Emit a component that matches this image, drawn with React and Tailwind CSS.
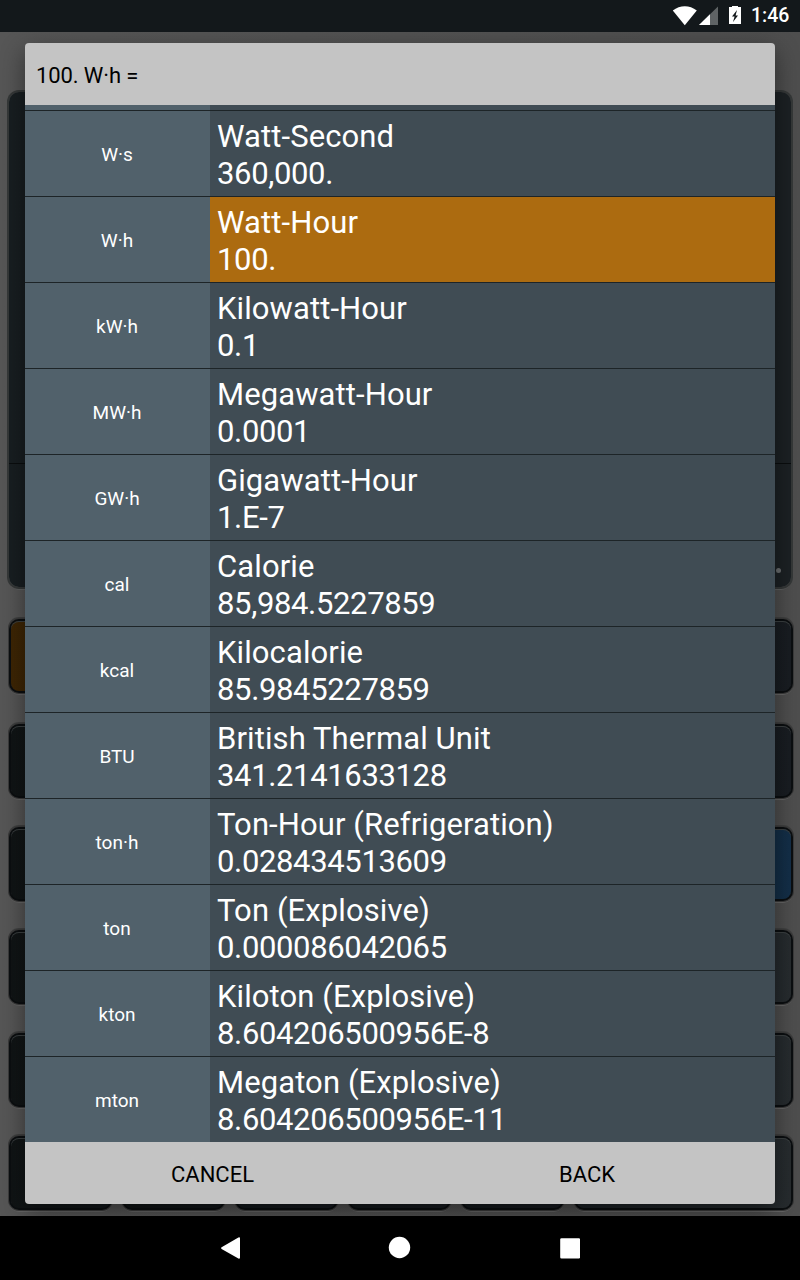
import React from 'react';
import clsx from 'clsx';

const units = [
  { symbol: 'W·s', name: 'Watt-Second', value: '360,000.' },
  { symbol: 'W·h', name: 'Watt-Hour', value: '100.', selected: true },
  { symbol: 'kW·h', name: 'Kilowatt-Hour', value: '0.1' },
  { symbol: 'MW·h', name: 'Megawatt-Hour', value: '0.0001' },
  { symbol: 'GW·h', name: 'Gigawatt-Hour', value: '1.E-7' },
  { symbol: 'cal', name: 'Calorie', value: '85,984.5227859' },
  { symbol: 'kcal', name: 'Kilocalorie', value: '85.9845227859' },
  { symbol: 'BTU', name: 'British Thermal Unit', value: '341.2141633128' },
  { symbol: 'ton·h', name: 'Ton-Hour (Refrigeration)', value: '0.028434513609' },
  { symbol: 'ton', name: 'Ton (Explosive)', value: '0.000086042065' },
  { symbol: 'kton', name: 'Kiloton (Explosive)', value: '8.604206500956E-8' },
  { symbol: 'mton', name: 'Megaton (Explosive)', value: '8.604206500956E-11' },
];

const DARK = 'from-[#101415] to-[#13181b]';
const NAVY = 'from-[#14191c] to-[#191d22]';
const SLATE = 'from-[#1c2226] to-[#272c2f]';

// Colours of each keypad row, first key to last key
const keyRows = [
  ['from-[#3d2504] to-[#422a07]', DARK, DARK, DARK, DARK, DARK, NAVY],
  [DARK, DARK, DARK, DARK, DARK, DARK, NAVY],
  [DARK, DARK, DARK, DARK, DARK, DARK, 'from-[#0d273f] to-[#142f48]'],
  [DARK, DARK, DARK, DARK, DARK, DARK, SLATE],
  [DARK, DARK, DARK, DARK, DARK, DARK, SLATE],
];

const Key = ({ color }) => (
  <div className="h-[74px] rounded-[10px] bg-[#0b0e10] p-[2px] shadow-[0_0_0_1px_#3b3b3b,0_-1px_0_1px_#404141,0_2px_0_0_#666]">
    <div
      className={clsx(
        'h-full rounded-[8px] bg-linear-to-r shadow-[inset_0_1px_0_0_#3c4142]',
        color
      )}
    />
  </div>
);

const StatusBar = () => (
  <div className="flex h-8 items-center justify-end bg-[#13181b] pr-[11px] text-white">
    <svg width="26" height="20" viewBox="0 0 26 20" fill="#fff">
      <path d="M.8 4.6C8-1.2 17.6-1.2 24.8 4.6L12.8 19.2Z" />
    </svg>
    <svg className="ml-px" width="20" height="20" viewBox="0 0 20 20">
      <path d="M19 .5V19H0Z" fill="#5f6365" />
      <path d="M11 8.3V19H0Z" fill="#fff" />
    </svg>
    <svg className="ml-[10px]" width="12" height="20" viewBox="0 0 12 20">
      <path d="M3 -1h6v2h3v17H0V1h3Z" fill="#fff" />
      <path d="M8 4L3 10.6h2.6L4 16l5-6.4H6.6Z" fill="#13181b" />
    </svg>
    <span className="ml-[10px] w-[38px] text-right text-[19.5px] leading-8 font-medium whitespace-nowrap">
      1:46
    </span>
  </div>
);

const Calculator = () => (
  <div className="h-[1184px] overflow-hidden bg-linear-to-r from-[#565656] to-[#4e4e4e] px-2 pt-[60px]">
    {/* Display */}
    <div className="mx-px flex h-[495px] flex-col rounded-[10px] bg-linear-to-r from-[#181e21] to-[#1c2124] shadow-[0_0_0_2px_#353838,0_3px_0_0_#606262]">
      <div className="h-[372px] border-b border-[#0a0d0e]" />
      <div className="flex flex-1 items-end justify-end pr-[10px] pb-[14px]">
        <div className="size-[5px] rounded-full bg-[#6a6d6f]" />
      </div>
    </div>

    {/* Keypad */}
    <div className="-mr-px ml-px mt-8 flex flex-col gap-[29px]">
      {keyRows.map((row, i) => (
        <div key={i} className={clsx('grid grid-cols-7 gap-[9px]', i === 0 && 'mb-0.5')}>
          {row.map((color, j) => (
            <Key key={j} color={color} />
          ))}
        </div>
      ))}
      <div className="grid grid-cols-[103px_103px_103px_103px_103px_1fr] gap-[10px]">
        <Key color={DARK} />
        <Key color={DARK} />
        <Key color={NAVY} />
        <Key color={NAVY} />
        <Key color={NAVY} />
        <Key color={SLATE} />
      </div>
    </div>
  </div>
);

const UnitRow = ({ unit }) => (
  <div className="flex h-[86px] border-t border-[#1d2427] text-white">
    <div className="flex w-[185px] items-center justify-center bg-[#51616b] pt-[3px] pr-px text-[19px]">
      {unit.symbol}
    </div>
    <div
      className={clsx(
        'flex-1 pt-[7px] pl-[7px] text-[31px] leading-[37px]',
        unit.selected ? 'bg-[#ac6b10]' : 'bg-[#404c54]'
      )}
    >
      <div className="tracking-[0.1px]">{unit.name}</div>
      <div className="tracking-[-0.35px]">{unit.value}</div>
    </div>
  </div>
);

const NavBar = () => (
  <div className="flex h-16 items-center justify-center bg-black">
    <svg width="360" height="24" viewBox="0 0 360 24" fill="#fff">
      <path d="M1.6 11.3L18.4 1.5Q20 .7 20 2.4V21.6Q20 23.3 18.4 22.5L1.6 12.9Q.4 12 1.6 11.3Z" />
      <circle cx="179.5" cy="11.5" r="10.7" />
      <rect className="translate-x-[0.3px]" x="339.9" y="2.2" width="20" height="20.4" rx="1.3" />
    </svg>
  </div>
);

const App = () => (
  <div className="relative h-[1280px] w-[800px] overflow-hidden font-['Roboto',sans-serif]">
    <StatusBar />
    <Calculator />
    <NavBar />

    {/* Conversion dialog */}
    <div className="absolute inset-x-0 top-8 h-[1184px] overflow-hidden px-[25px] pt-[11px]">
      <div className="flex h-[1161px] flex-col overflow-hidden rounded-[4px] bg-[#c4c4c4] text-[22px] text-black shadow-[0_8px_24px_rgba(0,0,0,0.45)]">
        <div className="flex h-[62px] items-center pt-[3px] pl-[11px] tracking-[-0.1px]">100. W·h =</div>
        <div className="h-[1037px]">
          <div className="flex h-[5px]">
            <div className="w-[185px] bg-[#51616b]" />
            <div className="flex-1 bg-[#404c54]" />
          </div>
          {units.map((unit) => (
            <UnitRow key={unit.symbol} unit={unit} />
          ))}
        </div>
        <div className="grid h-[62px] grid-cols-2">
          <button className="pt-[3px]">CANCEL</button>
          <button className="pt-[3px] pr-px">BACK</button>
        </div>
      </div>
    </div>
  </div>
);

export default App;
